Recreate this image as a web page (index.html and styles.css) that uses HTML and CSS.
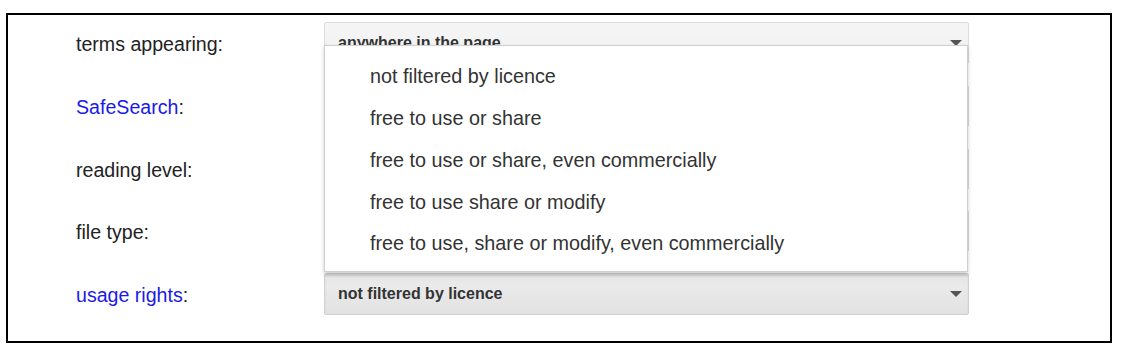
FILE: index.html
```html
<!DOCTYPE html>
<html lang="en">
<head>
<meta charset="utf-8">
<title>Advanced search</title>
<link rel="stylesheet" href="styles.css">
</head>
<body>
<div class="frame">
  <div class="form">
    <div class="label">terms appearing:</div>
    <div class="field">
      <div class="select"><span class="value">anywhere in the page</span><span class="arrow"></span></div>
    </div>

    <div class="label"><a class="link" href="#">SafeSearch</a>:</div>
    <div class="field">
      <div class="select"><span class="value"></span><span class="arrow"></span></div>
    </div>

    <div class="label">reading level:</div>
    <div class="field">
      <div class="select"><span class="value"></span><span class="arrow"></span></div>
    </div>

    <div class="label">file type:</div>
    <div class="field">
      <div class="select"><span class="value"></span><span class="arrow"></span></div>
    </div>

    <div class="label"><a class="link" href="#">usage rights</a>:</div>
    <div class="field">
      <div class="select select-open"><span class="value">not filtered by licence</span><span class="arrow"></span></div>
      <ul class="menu">
        <li class="option">not filtered by licence</li>
        <li class="option">free to use or share</li>
        <li class="option">free to use or share, even commercially</li>
        <li class="option">free to use share or modify</li>
        <li class="option">free to use, share or modify, even commercially</li>
      </ul>
    </div>
  </div>
</div>
</body>
</html>
```

FILE: styles.css
```css
html, body {
  margin: 0;
  padding: 0;
  background: #ffffff;
}

body {
  font-family: "Liberation Sans", Arial, sans-serif;
  color: #222222;
}

.frame {
  box-sizing: border-box;
  margin: 13px 0 0 6px;
  width: 1106px;
  height: 330px;
  border: 2px solid #000000;
  padding: 7px 0 0 68px;
}

.form {
  display: grid;
  grid-template-columns: 248px 645px;
  grid-auto-rows: 42px;
  row-gap: 20.75px;
}

.label {
  align-self: center;
  font-size: 19.6px;
  line-height: 22px;
  padding-top: 2px;
  color: #222222;
}

.link {
  color: #1a1ae8;
  text-decoration: none;
}

.field {
  position: relative;
}

.select {
  box-sizing: border-box;
  height: 42px;
  display: flex;
  align-items: center;
  justify-content: space-between;
  padding: 0 6px 0 13px;
  border: 1px solid #dcdcdc;
  border-radius: 2px;
  background: linear-gradient(#f5f5f5, #f1f1f1);
  font-size: 16px;
  font-weight: bold;
  color: #333333;
}

.select-open {
  border-color: #d0d0d0;
  background: linear-gradient(#e4e4e4, #eaeaea 30%, #e2e2e2);
  box-shadow: inset 0 2px 2px rgba(0, 0, 0, 0.08);
}

.arrow {
  width: 0;
  height: 0;
  border-left: 6px solid transparent;
  border-right: 6px solid transparent;
  border-top: 6px solid #555555;
}

.menu {
  position: absolute;
  left: 0;
  right: 1px;
  bottom: calc(100% + 1px);
  margin: 0;
  padding: 10px 0 6px;
  list-style: none;
  background: #ffffff;
  border: 1px solid #cfcfcf;
  box-shadow: 0 2px 4px rgba(0, 0, 0, 0.2);
  z-index: 2;
}

.option {
  height: 41.75px;
  line-height: 41.75px;
  padding-left: 45px;
  font-size: 19.8px;
  color: #333333;
  white-space: nowrap;
}
```
